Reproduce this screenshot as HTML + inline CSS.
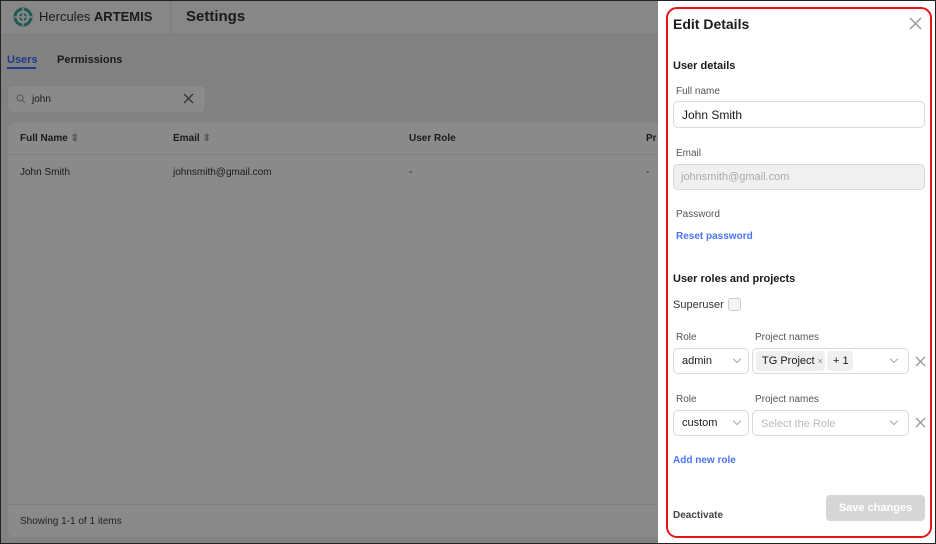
<!DOCTYPE html>
<html><head><style>
*{box-sizing:border-box;margin:0;padding:0}
body{width:936px;height:544px;overflow:hidden;font-family:"Liberation Sans",sans-serif;background:#828282;position:relative;color:#1a1a1a}
.a{position:absolute;white-space:nowrap}
.frame{position:absolute;left:0;top:0;width:936px;height:544px;border:1px solid #222;pointer-events:none;z-index:9}
.lbl{font-size:10px;color:#555}
.inp{position:absolute;border:1px solid #d9d9d9;border-radius:5px;background:#fff;font-size:12px;white-space:nowrap}
.chev{position:absolute;width:6px;height:6px;border-right:1px solid #aaa;border-bottom:1px solid #aaa;transform:rotate(45deg)}
</style></head><body>
<div class="a" style="left:0;top:0;width:658px;height:35px;background:#878787;border-bottom:1px solid #7c7c7c"></div>
<div class="a" style="left:170px;top:0;width:1px;height:35px;background:#7c7c7c"></div>
<svg class="a" style="left:13px;top:7px" width="20" height="20" viewBox="0 0 20 20"><circle cx="10" cy="10" r="8" fill="none" stroke="#1f5a55" stroke-width="3"/><circle cx="10" cy="10" r="3" fill="none" stroke="#1f5a55" stroke-width="2"/><path d="M10 1v18M1 10h18" stroke="#878787" stroke-width="1.5"/></svg>
<div class="a" style="left:39px;top:9px;font-size:13px;color:#1a1a1a">Hercules <b>ARTEMIS</b></div>
<div class="a" style="left:186px;top:8px;font-size:15px;font-weight:bold;color:#1a1a1a">Settings</div>
<div class="a" style="left:7px;top:54px;font-size:11px;font-weight:bold;color:#1e3a8a">Users</div>
<div class="a" style="left:7px;top:67px;width:29px;height:2px;background:#1e3a8a"></div>
<div class="a" style="left:57px;top:54px;font-size:11px;font-weight:bold">Permissions</div>
<div class="a" style="left:7px;top:85px;width:199px;height:28px;border-radius:5px;background:#8a8a8a;border:1px solid #7f7f7f"></div>
<svg class="a" style="left:16px;top:94px" width="10" height="10"><circle cx="4" cy="4" r="3" fill="none" stroke="#555" stroke-width="1"/><path d="M6 6l3 3" stroke="#555"/></svg>
<div class="a" style="left:32px;top:94px;font-size:10px">john</div>
<svg class="a" style="left:183px;top:93px" width="11" height="11"><path d="M1 1l9 9M10 1l-9 9" stroke="#333" stroke-width="1.3"/></svg>
<div class="a" style="left:8px;top:123px;width:660px;height:414px;background:#8a8a8a;border-radius:6px"></div>
<div class="a" style="left:8px;top:154px;width:660px;height:1px;background:#7e7e7e"></div>
<div class="a" style="left:8px;top:504px;width:660px;height:1px;background:#7e7e7e"></div>
<div class="a" style="left:20px;top:133px;font-size:10px;font-weight:bold">Full Name <span style="color:#555;font-size:10px">⇕</span></div>
<div class="a" style="left:173px;top:133px;font-size:10px;font-weight:bold">Email <span style="color:#555;font-size:10px">⇕</span></div>
<div class="a" style="left:409px;top:133px;font-size:10px;font-weight:bold">User Role</div>
<div class="a" style="left:646px;top:133px;font-size:10px;font-weight:bold">Pr</div>
<div class="a" style="left:20px;top:167px;font-size:10px">John Smith</div>
<div class="a" style="left:173px;top:167px;font-size:10px">johnsmith@gmail.com</div>
<div class="a" style="left:409px;top:167px;font-size:10px">-</div>
<div class="a" style="left:646px;top:167px;font-size:10px">-</div>
<div class="a" style="left:20px;top:516px;font-size:10px;color:#222">Showing 1-1 of 1 items</div>

<div class="a" style="left:658px;top:0;width:278px;height:544px;background:#fff"></div>
<div class="a" style="left:666px;top:7px;width:266px;height:531px;border:2px solid #e8141c;border-radius:11px"></div>
<div class="a" style="left:673px;top:16px;font-size:14px;font-weight:bold">Edit Details</div>
<svg class="a" style="left:909px;top:17px" width="13" height="13"><path d="M1 1l11 11M12 1l-11 11" stroke="#999" stroke-width="1.5"/></svg>
<div class="a" style="left:673px;top:60px;font-size:11px;font-weight:bold">User details</div>
<div class="a lbl" style="left:676px;top:86px">Full name</div>
<div class="inp" style="left:673px;top:101px;width:252px;height:27px;padding:6px 8px">John Smith</div>
<div class="a lbl" style="left:676px;top:148px">Email</div>
<div class="inp" style="left:673px;top:164px;width:252px;height:26px;padding:6px 7px;background:#f0f0f0;color:#aaa;font-size:11px">johnsmith@gmail.com</div>
<div class="a lbl" style="left:676px;top:209px">Password</div>
<div class="a" style="left:676px;top:231px;font-size:10px;font-weight:bold;color:#4a74f5">Reset password</div>
<div class="a" style="left:673px;top:273px;font-size:11px;font-weight:bold">User roles and projects</div>
<div class="a" style="left:673px;top:299px;font-size:11px;color:#333">Superuser</div>
<div class="a" style="left:728px;top:298px;width:13px;height:13px;border:1px solid #ccc;border-radius:3px;background:#f5f5f5"></div>

<div class="a lbl" style="left:676px;top:332px">Role</div>
<div class="a lbl" style="left:755px;top:332px">Project names</div>
<div class="inp" style="left:673px;top:348px;width:76px;height:26px;padding:6px 8px;font-size:11px">admin</div>
<div class="chev" style="left:734px;top:356px"></div>
<div class="inp" style="left:752px;top:348px;width:157px;height:26px"></div>
<div class="a" style="left:756px;top:351px;width:69px;height:20px;background:#efefef;border-radius:4px;font-size:11px;padding:4px 0 0 6px">TG Project <span style="color:#888;font-size:9px">×</span></div>
<div class="a" style="left:827px;top:351px;width:26px;height:20px;background:#efefef;border-radius:4px;font-size:11px;padding:4px 0 0 6px">+ 1</div>
<div class="chev" style="left:891px;top:356px"></div>
<svg class="a" style="left:915px;top:356px" width="11" height="11"><path d="M1 1l9 9M10 1l-9 9" stroke="#999" stroke-width="1.3"/></svg>

<div class="a lbl" style="left:676px;top:394px">Role</div>
<div class="a lbl" style="left:755px;top:394px">Project names</div>
<div class="inp" style="left:673px;top:410px;width:76px;height:26px;padding:6px 8px;font-size:11px">custom</div>
<div class="chev" style="left:734px;top:418px"></div>
<div class="inp" style="left:752px;top:410px;width:157px;height:26px;padding:7px 8px;font-size:11px;color:#bbb">Select the Role</div>
<div class="chev" style="left:891px;top:418px"></div>
<svg class="a" style="left:915px;top:417px" width="11" height="11"><path d="M1 1l9 9M10 1l-9 9" stroke="#999" stroke-width="1.3"/></svg>

<div class="a" style="left:673px;top:455px;font-size:10px;font-weight:bold;color:#4a74f5">Add new role</div>
<div class="a" style="left:826px;top:495px;width:99px;height:26px;background:#d6d6d6;border-radius:4px;color:#fff;font-size:11px;font-weight:bold;text-align:center;line-height:26px">Save changes</div>
<div class="a" style="left:673px;top:510px;font-size:10px;font-weight:bold;color:#444">Deactivate</div>
<div class="frame"></div>
</body></html>
